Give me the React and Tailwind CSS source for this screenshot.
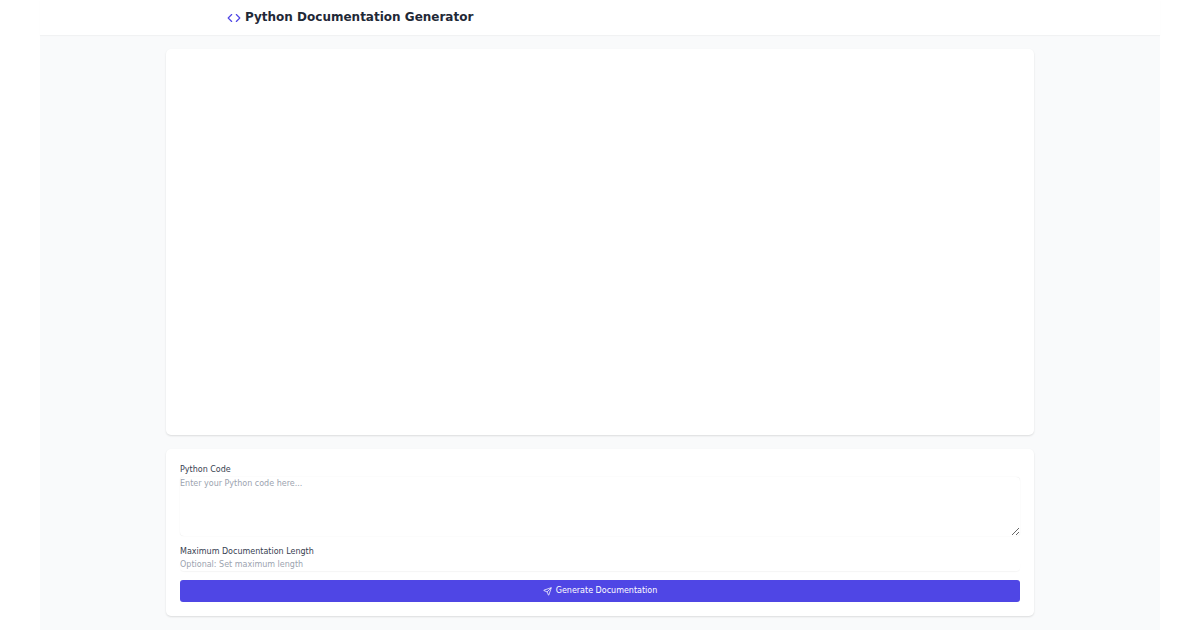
import { useState } from "react";
import { Code, Send } from "lucide-react";

export default function App(){

    const [code, setCode] = useState('');
    const [maxLength, setMaxLength] = useState('');

    function handleGenerate(e){
        e.preventDefault();
    }

    return(
        <div className="min-h-screen flex flex-col mx-10 bg-[#f9fafb] font-['DejaVu_Sans',sans-serif]">
            <header className="bg-white shadow-[0_1px_1px_rgba(0,0,0,0.03)]">
                <div className="max-w-3xl mx-auto h-[35px] px-[11px] flex items-center gap-1">
                    <Code className="w-3.5 h-3.5 text-[#4f46e5]" />
                    <h1 className="text-[12px] leading-[15px] font-bold text-[#1f2937]">Python Documentation Generator</h1>
                </div>
            </header>

            <main className="grow w-full max-w-4xl mx-auto p-[14px] flex flex-col gap-[14px]">
                <section className="grow bg-white rounded-[5px] shadow-[0_1px_2px_rgba(0,0,0,0.12)]" aria-live="polite"></section>

                <form className="bg-white rounded-[5px] shadow-[0_1px_2px_rgba(0,0,0,0.12)] p-[14px] flex flex-col" onSubmit={handleGenerate}>
                    <label htmlFor="code" className="text-[8px] leading-[14px] text-[#374151]">Python Code</label>
                    <textarea
                    id="code"
                    className="w-full h-[59px] mb-[9px] text-[8px] leading-[14px] rounded-sm shadow-[0_0_1px_rgba(0,0,0,0.15)] placeholder:text-[#9ca3af]"
                    placeholder="Enter your Python code here..."
                    value={code}
                    onChange={(e) => setCode(e.target.value)}
                    />

                    <label htmlFor="maxLength" className="text-[8px] leading-[14px] text-[#374151]">Maximum Documentation Length</label>
                    <input
                    id="maxLength"
                    className="w-full h-[12px] mb-[9px] text-[8px] rounded-sm shadow-[0_1px_1px_rgba(0,0,0,0.04)] placeholder:text-[#9ca3af]"
                    type="number"
                    placeholder="Optional: Set maximum length"
                    value={maxLength}
                    onChange={(e) => setMaxLength(e.target.value)}
                    />

                    <button className="w-full h-[22px] flex items-center justify-center gap-1 bg-[#4f46e5] text-white text-[8px] rounded-[3px]">
                        <Send className="w-[9px] h-[9px]" />
                        Generate Documentation
                    </button>
                </form>
            </main>
        </div>
    );
}
